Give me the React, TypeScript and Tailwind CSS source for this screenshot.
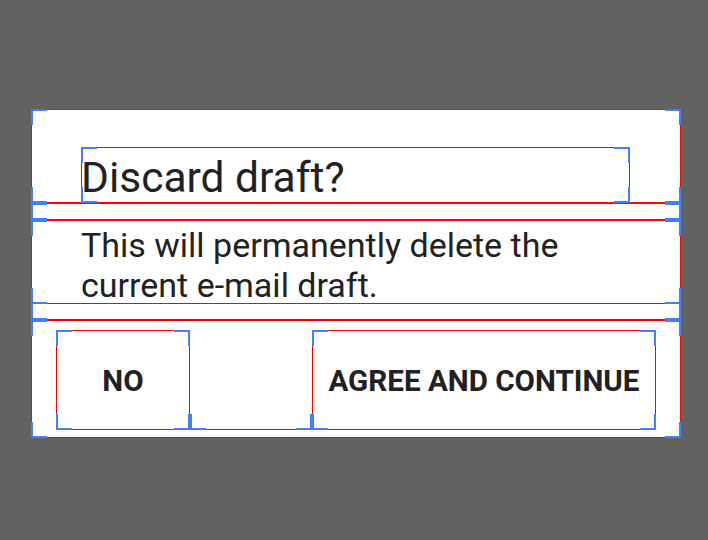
import type { ReactNode } from "react";

const BAR = "pointer-events-none absolute bg-[#3f80ff]";

function Corners() {
  return (
    <>
      <span className={`${BAR} left-0 top-0 h-[2px] w-4`} />
      <span className={`${BAR} left-0 top-0 h-4 w-[2px]`} />
      <span className={`${BAR} right-0 top-0 h-[2px] w-4`} />
      <span className={`${BAR} right-0 top-0 h-4 w-[2px]`} />
      <span className={`${BAR} bottom-0 left-0 h-[2px] w-4`} />
      <span className={`${BAR} bottom-0 left-0 h-4 w-[2px]`} />
      <span className={`${BAR} bottom-0 right-0 h-[2px] w-4`} />
      <span className={`${BAR} bottom-0 right-0 h-4 w-[2px]`} />
    </>
  );
}

function Bounds({
  className = "",
  children,
}: {
  className?: string;
  children?: ReactNode;
}) {
  return (
    <div className={`relative shadow-[inset_0_0_0_1px_#ff0000] ${className}`}>
      {children}
      <Corners />
    </div>
  );
}

// zero-height filler between the two buttons, only its bottom edge shows
function Spacer() {
  return (
    <div className="relative mt-[99px] h-px flex-1 bg-[#ff0000]">
      <span className={`${BAR} bottom-0 left-0 h-[2px] w-4`} />
      <span className={`${BAR} bottom-0 left-0 h-4 w-[2px]`} />
      <span className={`${BAR} bottom-0 right-0 h-[2px] w-4`} />
      <span className={`${BAR} bottom-0 right-0 h-4 w-[2px]`} />
    </div>
  );
}

function DialogButton({ label, width }: { label: string; width: string }) {
  return (
    <Bounds
      className={`${width} flex h-[100px] items-center justify-center pt-[3px]`}
    >
      <span className="text-[29.6px] leading-none font-bold text-[#212121]">
        {label}
      </span>
    </Bounds>
  );
}

export default function App() {
  return (
    <div className="min-h-[540px] bg-[#626262] pt-[109px] pl-[31px] font-['Roboto',sans-serif]">
      <Bounds className="flex h-[329px] w-[650px] flex-col bg-white">
        <Bounds className="h-[94px] pt-[38px] pl-[50px]">
          <Bounds className="h-[56px] w-[549px] pt-[6px]">
            <p className="text-[42.5px] leading-[49px] text-[#212121]">
              Discard draft?
            </p>
          </Bounds>
        </Bounds>

        <Bounds className="flex h-[117px] flex-col">
          <Bounds className="h-[17px]" />
          <Bounds className="h-[84px] pt-[5px] pl-[50px]">
            <p className="text-[34px] leading-[40px] text-[#212121]">
              This will permanently delete the
              <br />
              current e-mail draft.
            </p>
          </Bounds>
        </Bounds>

        <Bounds className="flex h-[118px] items-start px-[25px] pt-[10px]">
          <DialogButton label="NO" width="w-[134px]" />
          <Spacer />
          <DialogButton label="AGREE AND CONTINUE" width="w-[344px]" />
        </Bounds>
      </Bounds>
    </div>
  );
}
